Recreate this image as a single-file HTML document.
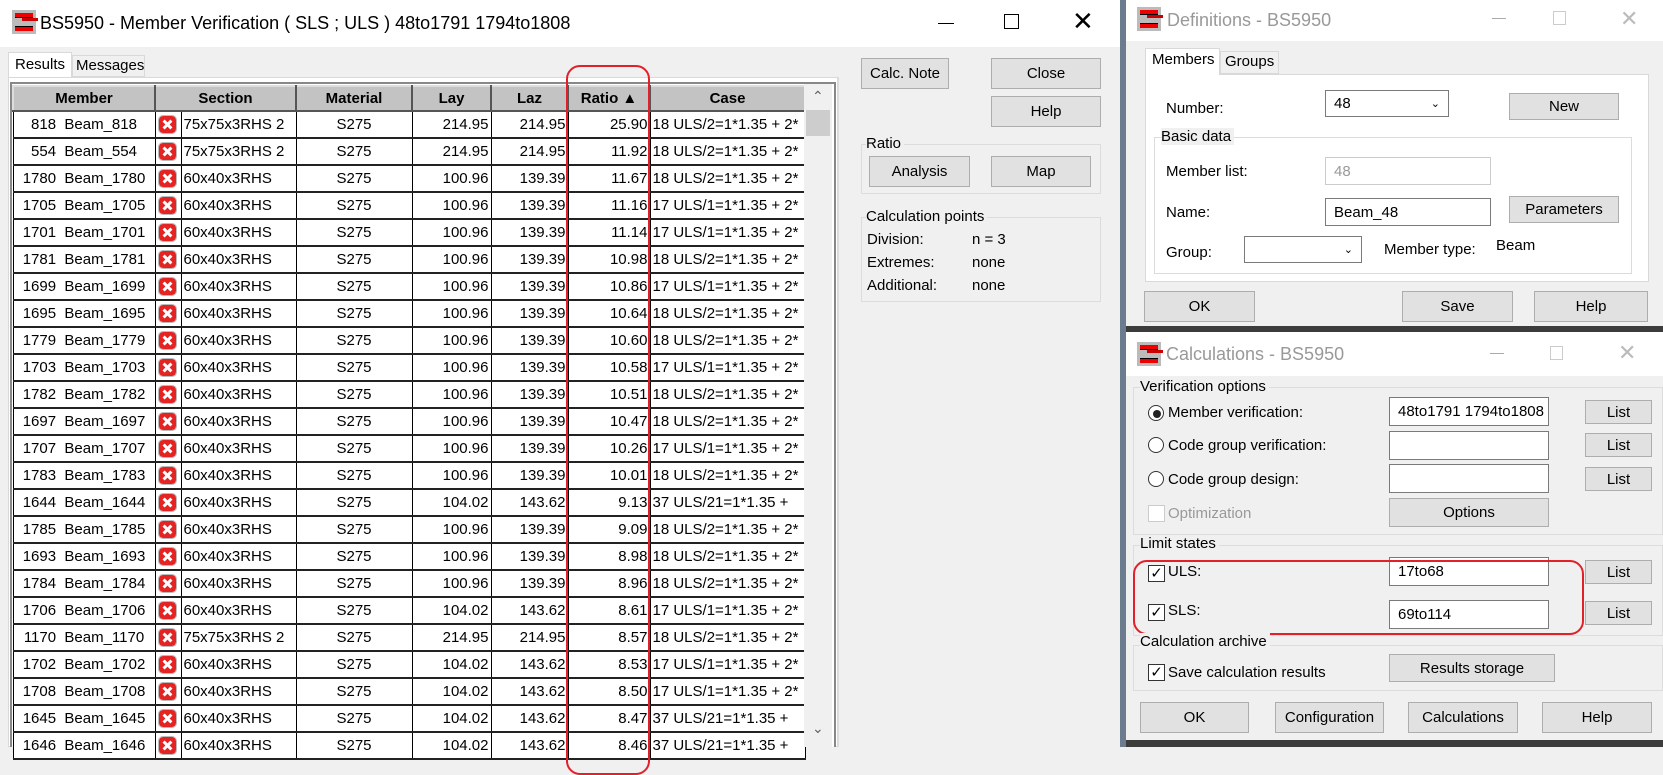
<!DOCTYPE html>
<html><head><meta charset="utf-8">
<style>
*{box-sizing:border-box;margin:0;padding:0}
body{width:1663px;height:747px;overflow:hidden;background:#f0f0f0;font-family:"Liberation Sans",Arial,sans-serif;font-size:15px;color:#000;position:relative}
.a{position:absolute}
.btn{position:absolute;background:#e1e1e1;border:1px solid #adadad;text-align:center;font-size:15px;display:flex;align-items:center;justify-content:center}
.tb{position:absolute;background:#fff;border:1px solid #7a7a7a;padding-left:8px;display:flex;align-items:center;font-size:15px}
.grp{position:absolute;border:1px solid #dcdcdc}
.lbl{position:absolute;background:#f0f0f0;padding-right:3px;font-size:15px}
.t{position:absolute;font-size:15px;white-space:nowrap}
table{border-collapse:collapse;table-layout:fixed}
td,th{height:27px;border:1px solid #000;border-bottom:2px solid #222;white-space:nowrap;overflow:hidden;font-size:15px;padding:0 2px}
th{background:#c3c3c3;font-weight:bold;height:25px;border:2px solid #fff;border-right-color:#555;border-bottom-color:#555;border-left-color:#ddd;border-top-color:#ddd}
td{background:#fff}
.c{text-align:center}.r{text-align:right}.l{text-align:left}
.ic{padding:0 3px}
.x{display:inline-block;width:17px;height:17px;background:#e52323;border-radius:4px;position:relative;vertical-align:middle;outline:1px solid #bbb}
.x:before,.x:after{content:"";position:absolute;left:3px;top:7px;width:11px;height:3px;background:#fff;transform:rotate(45deg)}
.x:after{transform:rotate(-45deg)}
.logo{position:absolute;width:24px;height:24px;background:#bbb}
.logo:before{content:"";position:absolute;left:3px;top:3px;width:18px;height:4px;background:#e00;border-bottom:1px solid #000}
.logo:after{content:"";position:absolute;left:3px;top:16px;width:18px;height:4px;background:#e00;border-top:1px solid #000;box-shadow:6px -9px 0 -1px #c00}
.tt{position:absolute;font-size:18px;white-space:nowrap}
.gray{color:#999}
.radio{position:absolute;width:16px;height:16px;border:1px solid #333;border-radius:50%;background:#fff}
.chk{position:absolute;width:17px;height:17px;border:1px solid #333;background:#fff;font-size:15px;line-height:15px;text-align:center}
</style></head><body>

<!-- main window -->
<div class="a" style="left:0;top:0;width:1122px;height:747px;background:#f0f0f0"></div>
<div class="a" style="left:0;top:0;width:1122px;height:47px;background:#fff"></div>
<div class="logo" style="left:12px;top:10px"></div>
<div class="tt" style="left:40px;top:13px">BS5950 - Member Verification ( SLS ; ULS ) 48to1791 1794to1808</div>
<div class="a" style="left:938px;top:23px;width:16px;height:1px;background:#000"></div>
<div class="a" style="left:1004px;top:14px;width:15px;height:15px;border:1px solid #000"></div>
<div class="a" style="left:1072px;top:8px;font-size:26px;line-height:26px">✕</div>

<div class="a" style="left:8px;top:52px;width:64px;height:26px;background:#fff;border:1px solid #d9d9d9;border-bottom:none;padding:3px 6px">Results</div>
<div class="a" style="left:72px;top:55px;width:73px;height:22px;background:#f0f0f0;border:1px solid #d9d9d9;padding:1px 3px">Messages</div>
<div class="a" style="left:8px;top:77px;width:830px;height:670px;border:1px solid #d9d9d9;background:#fff"></div>
<div class="a" style="left:10px;top:82px;width:826px;height:665px;background:#fff;border:2px solid #888;border-bottom:none"></div>

<table class="a" style="left:12px;top:85px;width:792px">
<colgroup><col style="width:142px"><col style="width:26px"><col style="width:115px"><col style="width:116px"><col style="width:79px"><col style="width:77px"><col style="width:82px"><col style="width:155px"></colgroup>
<tr><th>Member</th><th colspan="2">Section</th><th>Material</th><th>Lay</th><th>Laz</th><th>Ratio ▲</th><th>Case</th></tr>
<tr><td class="c">818&nbsp; Beam_818</td><td class="ic"><span class="x"></span></td><td>75x75x3RHS 2</td><td class="c">S275</td><td class="r">214.95</td><td class="r">214.95</td><td class="r">25.90</td><td>18 ULS/2=1*1.35 + 2*</td></tr>
<tr><td class="c">554&nbsp; Beam_554</td><td class="ic"><span class="x"></span></td><td>75x75x3RHS 2</td><td class="c">S275</td><td class="r">214.95</td><td class="r">214.95</td><td class="r">11.92</td><td>18 ULS/2=1*1.35 + 2*</td></tr>
<tr><td class="c">1780&nbsp; Beam_1780</td><td class="ic"><span class="x"></span></td><td>60x40x3RHS</td><td class="c">S275</td><td class="r">100.96</td><td class="r">139.39</td><td class="r">11.67</td><td>18 ULS/2=1*1.35 + 2*</td></tr>
<tr><td class="c">1705&nbsp; Beam_1705</td><td class="ic"><span class="x"></span></td><td>60x40x3RHS</td><td class="c">S275</td><td class="r">100.96</td><td class="r">139.39</td><td class="r">11.16</td><td>17 ULS/1=1*1.35 + 2*</td></tr>
<tr><td class="c">1701&nbsp; Beam_1701</td><td class="ic"><span class="x"></span></td><td>60x40x3RHS</td><td class="c">S275</td><td class="r">100.96</td><td class="r">139.39</td><td class="r">11.14</td><td>17 ULS/1=1*1.35 + 2*</td></tr>
<tr><td class="c">1781&nbsp; Beam_1781</td><td class="ic"><span class="x"></span></td><td>60x40x3RHS</td><td class="c">S275</td><td class="r">100.96</td><td class="r">139.39</td><td class="r">10.98</td><td>18 ULS/2=1*1.35 + 2*</td></tr>
<tr><td class="c">1699&nbsp; Beam_1699</td><td class="ic"><span class="x"></span></td><td>60x40x3RHS</td><td class="c">S275</td><td class="r">100.96</td><td class="r">139.39</td><td class="r">10.86</td><td>17 ULS/1=1*1.35 + 2*</td></tr>
<tr><td class="c">1695&nbsp; Beam_1695</td><td class="ic"><span class="x"></span></td><td>60x40x3RHS</td><td class="c">S275</td><td class="r">100.96</td><td class="r">139.39</td><td class="r">10.64</td><td>18 ULS/2=1*1.35 + 2*</td></tr>
<tr><td class="c">1779&nbsp; Beam_1779</td><td class="ic"><span class="x"></span></td><td>60x40x3RHS</td><td class="c">S275</td><td class="r">100.96</td><td class="r">139.39</td><td class="r">10.60</td><td>18 ULS/2=1*1.35 + 2*</td></tr>
<tr><td class="c">1703&nbsp; Beam_1703</td><td class="ic"><span class="x"></span></td><td>60x40x3RHS</td><td class="c">S275</td><td class="r">100.96</td><td class="r">139.39</td><td class="r">10.58</td><td>17 ULS/1=1*1.35 + 2*</td></tr>
<tr><td class="c">1782&nbsp; Beam_1782</td><td class="ic"><span class="x"></span></td><td>60x40x3RHS</td><td class="c">S275</td><td class="r">100.96</td><td class="r">139.39</td><td class="r">10.51</td><td>18 ULS/2=1*1.35 + 2*</td></tr>
<tr><td class="c">1697&nbsp; Beam_1697</td><td class="ic"><span class="x"></span></td><td>60x40x3RHS</td><td class="c">S275</td><td class="r">100.96</td><td class="r">139.39</td><td class="r">10.47</td><td>18 ULS/2=1*1.35 + 2*</td></tr>
<tr><td class="c">1707&nbsp; Beam_1707</td><td class="ic"><span class="x"></span></td><td>60x40x3RHS</td><td class="c">S275</td><td class="r">100.96</td><td class="r">139.39</td><td class="r">10.26</td><td>17 ULS/1=1*1.35 + 2*</td></tr>
<tr><td class="c">1783&nbsp; Beam_1783</td><td class="ic"><span class="x"></span></td><td>60x40x3RHS</td><td class="c">S275</td><td class="r">100.96</td><td class="r">139.39</td><td class="r">10.01</td><td>18 ULS/2=1*1.35 + 2*</td></tr>
<tr><td class="c">1644&nbsp; Beam_1644</td><td class="ic"><span class="x"></span></td><td>60x40x3RHS</td><td class="c">S275</td><td class="r">104.02</td><td class="r">143.62</td><td class="r">9.13</td><td>37 ULS/21=1*1.35 +</td></tr>
<tr><td class="c">1785&nbsp; Beam_1785</td><td class="ic"><span class="x"></span></td><td>60x40x3RHS</td><td class="c">S275</td><td class="r">100.96</td><td class="r">139.39</td><td class="r">9.09</td><td>18 ULS/2=1*1.35 + 2*</td></tr>
<tr><td class="c">1693&nbsp; Beam_1693</td><td class="ic"><span class="x"></span></td><td>60x40x3RHS</td><td class="c">S275</td><td class="r">100.96</td><td class="r">139.39</td><td class="r">8.98</td><td>18 ULS/2=1*1.35 + 2*</td></tr>
<tr><td class="c">1784&nbsp; Beam_1784</td><td class="ic"><span class="x"></span></td><td>60x40x3RHS</td><td class="c">S275</td><td class="r">100.96</td><td class="r">139.39</td><td class="r">8.96</td><td>18 ULS/2=1*1.35 + 2*</td></tr>
<tr><td class="c">1706&nbsp; Beam_1706</td><td class="ic"><span class="x"></span></td><td>60x40x3RHS</td><td class="c">S275</td><td class="r">104.02</td><td class="r">143.62</td><td class="r">8.61</td><td>17 ULS/1=1*1.35 + 2*</td></tr>
<tr><td class="c">1170&nbsp; Beam_1170</td><td class="ic"><span class="x"></span></td><td>75x75x3RHS 2</td><td class="c">S275</td><td class="r">214.95</td><td class="r">214.95</td><td class="r">8.57</td><td>18 ULS/2=1*1.35 + 2*</td></tr>
<tr><td class="c">1702&nbsp; Beam_1702</td><td class="ic"><span class="x"></span></td><td>60x40x3RHS</td><td class="c">S275</td><td class="r">104.02</td><td class="r">143.62</td><td class="r">8.53</td><td>17 ULS/1=1*1.35 + 2*</td></tr>
<tr><td class="c">1708&nbsp; Beam_1708</td><td class="ic"><span class="x"></span></td><td>60x40x3RHS</td><td class="c">S275</td><td class="r">104.02</td><td class="r">143.62</td><td class="r">8.50</td><td>17 ULS/1=1*1.35 + 2*</td></tr>
<tr><td class="c">1645&nbsp; Beam_1645</td><td class="ic"><span class="x"></span></td><td>60x40x3RHS</td><td class="c">S275</td><td class="r">104.02</td><td class="r">143.62</td><td class="r">8.47</td><td>37 ULS/21=1*1.35 +</td></tr>
<tr><td class="c">1646&nbsp; Beam_1646</td><td class="ic"><span class="x"></span></td><td>60x40x3RHS</td><td class="c">S275</td><td class="r">104.02</td><td class="r">143.62</td><td class="r">8.46</td><td>37 ULS/21=1*1.35 +</td></tr>
</table>
<!-- scrollbar -->
<div class="a" style="left:804px;top:84px;width:28px;height:663px;background:#f0f0f0"></div>
<div class="a" style="left:812px;top:88px;color:#606060;font-size:14px">&#8963;</div>
<div class="a" style="left:806px;top:110px;width:24px;height:26px;background:#cdcdcd"></div>
<div class="a" style="left:812px;top:720px;color:#606060;font-size:14px">&#8964;</div>
<div class="a" style="left:838px;top:77px;width:1px;height:670px;background:#ddd"></div>
<!-- ratio oval -->
<div class="a" style="left:566px;top:65px;width:84px;height:710px;border:2px solid #e3202a;border-radius:14px"></div>

<!-- main right buttons -->
<div class="btn" style="left:861px;top:58px;width:88px;height:31px">Calc. Note</div>
<div class="btn" style="left:991px;top:58px;width:110px;height:31px">Close</div>
<div class="btn" style="left:991px;top:96px;width:110px;height:31px">Help</div>
<div class="grp" style="left:861px;top:144px;width:240px;height:50px"></div>
<div class="lbl" style="left:866px;top:135px">Ratio</div>
<div class="btn" style="left:869px;top:156px;width:101px;height:31px">Analysis</div>
<div class="btn" style="left:991px;top:156px;width:100px;height:31px">Map</div>
<div class="grp" style="left:861px;top:217px;width:240px;height:85px"></div>
<div class="lbl" style="left:866px;top:208px">Calculation points</div>
<div class="t" style="left:867px;top:231px">Division:</div><div class="t" style="left:972px;top:231px">n = 3</div>
<div class="t" style="left:867px;top:254px">Extremes:</div><div class="t" style="left:972px;top:254px">none</div>
<div class="t" style="left:867px;top:277px">Additional:</div><div class="t" style="left:972px;top:277px">none</div>

<!-- separator -->
<div class="a" style="left:1120px;top:0;width:6px;height:747px;background:#6b7c8f"></div>

<!-- Definitions window -->
<div class="a" style="left:1126px;top:0;width:537px;height:327px;background:#f0f0f0"></div>
<div class="a" style="left:1126px;top:0;width:537px;height:41px;background:#fff"></div>
<div class="logo" style="left:1137px;top:7px"></div>
<div class="tt gray" style="left:1167px;top:10px">Definitions - BS5950</div>
<div class="a" style="left:1492px;top:18px;width:14px;height:1px;background:#aaa"></div>
<div class="a" style="left:1553px;top:11px;width:13px;height:14px;border:1px solid #ccc"></div>
<div class="a gray" style="left:1620px;top:6px;font-size:22px;color:#bbb">✕</div>
<div class="a" style="left:1145px;top:74px;width:504px;height:208px;border:1px solid #d9d9d9;background:#fff"></div>
<div class="a" style="left:1145px;top:48px;width:75px;height:27px;background:#fff;border:1px solid #d9d9d9;border-bottom:none;padding:2px 6px">Members</div>
<div class="a" style="left:1220px;top:51px;width:59px;height:23px;border:1px solid #d9d9d9;padding:1px 4px">Groups</div>
<div class="t" style="left:1166px;top:100px">Number:</div>
<div class="tb" style="left:1325px;top:90px;width:124px;height:27px">48<span style="position:absolute;right:8px;font-size:11px">&#8964;</span></div>
<div class="btn" style="left:1509px;top:93px;width:110px;height:27px">New</div>
<div class="grp" style="left:1154px;top:137px;width:478px;height:137px"></div>
<div class="lbl" style="left:1161px;top:128px">Basic data</div>
<div class="t" style="left:1166px;top:163px">Member list:</div>
<div class="tb gray" style="left:1325px;top:157px;width:166px;height:28px;border-color:#ccc">48</div>
<div class="t" style="left:1166px;top:204px">Name:</div>
<div class="tb" style="left:1325px;top:198px;width:166px;height:28px">Beam_48</div>
<div class="btn" style="left:1509px;top:196px;width:110px;height:27px">Parameters</div>
<div class="t" style="left:1166px;top:244px">Group:</div>
<div class="tb" style="left:1244px;top:236px;width:118px;height:27px"><span style="position:absolute;right:8px;font-size:11px">&#8964;</span></div>
<div class="t" style="left:1384px;top:241px">Member type:</div>
<div class="t" style="left:1496px;top:237px">Beam</div>
<div class="btn" style="left:1144px;top:291px;width:111px;height:31px">OK</div>
<div class="btn" style="left:1402px;top:291px;width:111px;height:31px">Save</div>
<div class="btn" style="left:1534px;top:291px;width:114px;height:31px">Help</div>
<div class="a" style="left:1126px;top:326px;width:537px;height:6px;background:#3c3c3c"></div>

<!-- Calculations window -->
<div class="a" style="left:1126px;top:332px;width:537px;height:408px;background:#f0f0f0"></div>
<div class="a" style="left:1126px;top:332px;width:537px;height:44px;background:#fff"></div>
<div class="logo" style="left:1137px;top:342px"></div>
<div class="tt gray" style="left:1166px;top:344px">Calculations - BS5950</div>
<div class="a" style="left:1490px;top:353px;width:14px;height:1px;background:#aaa"></div>
<div class="a" style="left:1550px;top:346px;width:13px;height:14px;border:1px solid #ccc"></div>
<div class="a" style="left:1618px;top:340px;font-size:22px;color:#bbb">✕</div>

<div class="grp" style="left:1133px;top:387px;width:530px;height:148px"></div>
<div class="lbl" style="left:1140px;top:378px">Verification options</div>
<div class="radio" style="left:1148px;top:405px"></div><div class="a" style="left:1153px;top:410px;width:8px;height:8px;border-radius:50%;background:#222"></div>
<div class="t" style="left:1168px;top:404px">Member verification:</div>
<div class="tb" style="left:1389px;top:397px;width:160px;height:29px">48to1791 1794to1808</div>
<div class="btn" style="left:1585px;top:400px;width:67px;height:24px">List</div>
<div class="radio" style="left:1148px;top:437px"></div>
<div class="t" style="left:1168px;top:437px">Code group verification:</div>
<div class="tb" style="left:1389px;top:431px;width:160px;height:29px"></div>
<div class="btn" style="left:1585px;top:433px;width:67px;height:24px">List</div>
<div class="radio" style="left:1148px;top:471px"></div>
<div class="t" style="left:1168px;top:471px">Code group design:</div>
<div class="tb" style="left:1389px;top:464px;width:160px;height:29px"></div>
<div class="btn" style="left:1585px;top:467px;width:67px;height:24px">List</div>
<div class="chk" style="left:1148px;top:505px;border-color:#ccc"></div>
<div class="t gray" style="left:1168px;top:505px">Optimization</div>
<div class="btn" style="left:1389px;top:498px;width:160px;height:29px">Options</div>

<div class="grp" style="left:1133px;top:545px;width:530px;height:91px"></div>
<div class="lbl" style="left:1140px;top:535px">Limit states</div>
<div class="chk" style="left:1148px;top:565px">✓</div>
<div class="t" style="left:1168px;top:563px">ULS:</div>
<div class="tb" style="left:1389px;top:557px;width:160px;height:29px">17to68</div>
<div class="btn" style="left:1585px;top:560px;width:67px;height:24px">List</div>
<div class="chk" style="left:1148px;top:604px">✓</div>
<div class="t" style="left:1168px;top:602px">SLS:</div>
<div class="tb" style="left:1389px;top:600px;width:160px;height:29px">69to114</div>
<div class="btn" style="left:1585px;top:601px;width:67px;height:24px">List</div>
<div class="a" style="left:1133px;top:560px;width:451px;height:75px;border:2px solid #e3202a;border-radius:14px"></div>

<div class="grp" style="left:1133px;top:645px;width:530px;height:46px"></div>
<div class="lbl" style="left:1140px;top:633px">Calculation archive</div>
<div class="chk" style="left:1148px;top:664px">✓</div>
<div class="t" style="left:1168px;top:664px">Save calculation results</div>
<div class="btn" style="left:1389px;top:654px;width:166px;height:28px">Results storage</div>

<div class="btn" style="left:1140px;top:702px;width:109px;height:31px">OK</div>
<div class="btn" style="left:1275px;top:702px;width:109px;height:31px">Configuration</div>
<div class="btn" style="left:1408px;top:702px;width:110px;height:31px">Calculations</div>
<div class="btn" style="left:1542px;top:702px;width:110px;height:31px">Help</div>
<div class="a" style="left:1126px;top:740px;width:537px;height:7px;background:#3c3c3c"></div>
</body></html>
